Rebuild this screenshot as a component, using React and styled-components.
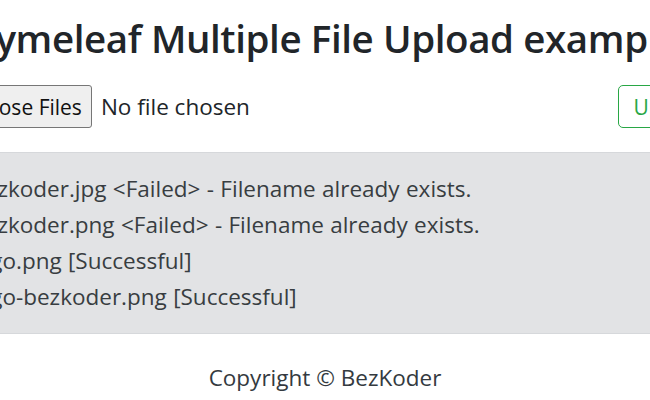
import React from "react";
import styled, { createGlobalStyle } from "styled-components";

const GlobalStyle = createGlobalStyle`
  html, body {
    margin: 0;
    padding: 0;
    background: #fff;
    overflow: hidden;
  }
  body {
    font-family: "Open Sans", "Noto Sans", sans-serif;
    color: #212529;
  }
`;

const Main = styled.div`
  width: 769px;
  margin-left: -50px;
`;

const Title = styled.h3`
  margin: 0;
  padding-top: 10px;
  font-size: 38.5px;
  line-height: 56px;
  font-weight: 600;
  color: #212529;
  white-space: nowrap;
  letter-spacing: -0.4px;
`;

const FormRow = styled.div`
  display: flex;
  justify-content: space-between;
  align-items: center;
  margin-top: 19px;
`;

const FilePicker = styled.div`
  display: flex;
  align-items: center;
  gap: 9px;
  font-size: 22.5px;
`;

const PickButton = styled.span`
  display: inline-flex;
  align-items: center;
  height: 41px;
  padding: 0 9px;
  border: 1px solid #767676;
  border-radius: 3px;
  background: #efefef;
  color: #111;
  font-size: 21px;
  white-space: nowrap;
`;

const NoFile = styled.span`
  color: #212529;
`;

const UploadButton = styled.button`
  height: 43px;
  padding: 0 14px;
  border: 1px solid #28a745;
  border-radius: 5px;
  background: transparent;
  color: #28a745;
  font-family: inherit;
  font-size: 21px;
`;

const Alert = styled.div`
  margin-top: 24px;
  padding: 18px 20px;
  background: #e2e3e5;
  border: 1px solid #d6d8db;
  border-radius: 5px;
  color: #383d41;
`;

const Message = styled.div`
  font-size: 22.5px;
  line-height: 36px;
  white-space: nowrap;
  word-spacing: 0.5px;
`;

const Footer = styled.footer`
  margin-top: 26px;
  text-align: center;
  font-size: 22.5px;
  line-height: 36px;
  color: #343a40;
`;

const messages = [
  "bezkoder.jpg <Failed> - Filename already exists.",
  "bezkoder.png <Failed> - Filename already exists.",
  "logo.png [Successful]",
  "logo-bezkoder.png [Successful]",
];

export default function App() {
  return (
    <>
      <GlobalStyle />
      <Main>
        <Title>Thymeleaf Multiple File Upload example</Title>
        <FormRow>
          <FilePicker>
            <PickButton>Choose Files</PickButton>
            <NoFile>No file chosen</NoFile>
          </FilePicker>
          <UploadButton>Upload</UploadButton>
        </FormRow>
        <Alert>
          {messages.map((m) => (
            <Message key={m}>{m}</Message>
          ))}
        </Alert>
      </Main>
      <Footer>Copyright © BezKoder</Footer>
    </>
  );
}
